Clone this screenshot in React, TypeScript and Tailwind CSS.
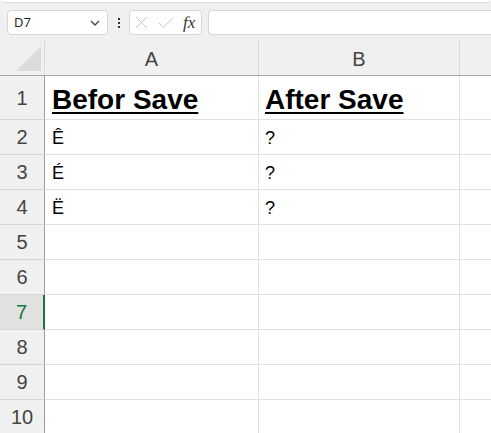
import React from "react";

const rows = [
  { n: 1, a: "Befor Save", b: "After Save", h: true },
  { n: 2, a: "Ê", b: "?" },
  { n: 3, a: "É", b: "?" },
  { n: 4, a: "Ë", b: "?" },
  { n: 5, a: "", b: "" },
  { n: 6, a: "", b: "" },
  { n: 7, a: "", b: "", active: true },
  { n: 8, a: "", b: "" },
  { n: 9, a: "", b: "" },
  { n: 10, a: "", b: "" },
];

export default function App() {
  return (
    <div
      className="w-[491px] h-[433px] overflow-hidden bg-[#f0f0f0] text-black"
      style={{ fontFamily: '"Liberation Sans", Arial, sans-serif' }}
    >
      {/* top strip */}
      <div className="h-[3px] mx-[1px] bg-white border-b border-[#d9d9d9] rounded-b-[3px]" />
      {/* formula bar */}
      <div className="h-[37px] flex items-start pt-[7px] pl-[7px]">
        <div className="w-[101px] h-[25px] bg-white border border-[#d6d6d6] rounded-[4px] flex items-center pl-[6px] pr-[6px]">
          <span className="text-[13px] text-[#1a1a1a] flex-1" style={{ fontFamily: '"Open Sans", sans-serif' }}>D7</span>
          <svg width="10" height="6" viewBox="0 0 10 6" className="mr-[1px]">
            <path d="M1 1 L5 5 L9 1" fill="none" stroke="#444" strokeWidth="1.3" />
          </svg>
        </div>
        <div className="w-[21px] h-[25px] flex flex-col items-center justify-center gap-[2px]">
          <div className="w-[2px] h-[2px] bg-[#333]" />
          <div className="w-[2px] h-[2px] bg-[#333]" />
          <div className="w-[2px] h-[2px] bg-[#333]" />
        </div>
        <div className="w-[73px] h-[25px] bg-white border border-[#d6d6d6] rounded-[4px] flex items-center pl-[5px]">
          <svg width="13" height="13" viewBox="0 0 13 13">
            <path d="M1 1 L12 12 M12 1 L1 12" stroke="#c8c8c8" strokeWidth="1" fill="none" />
          </svg>
          <svg width="16" height="12" viewBox="0 0 16 12" className="ml-[10px]">
            <path d="M1 6 L5.5 10.5 L15 1" stroke="#c8c8c8" strokeWidth="1" fill="none" />
          </svg>
          <span
            className="ml-[9px] text-[17px] italic text-[#333] leading-none"
            style={{ fontFamily: '"Liberation Serif", "DejaVu Serif", serif' }}
          >
            fx
          </span>
        </div>
        <div className="ml-[6px] flex-1 h-[25px] bg-white border border-[#d6d6d6] rounded-l-[4px] border-r-0" />
      </div>
      {/* grid */}
      <div className="bg-white">
        {/* column header */}
        <div className="flex h-[36px] bg-[#f0f0f0] border-b border-[#a6a6a6]">
          <div className="w-[45px] shrink-0 border-r border-[#dadada] relative">
            <svg width="26" height="26" viewBox="0 0 26 26" className="absolute left-[16px] top-[6px]">
              <path d="M25 0 L25 25 L0 25 Z" fill="#dcdcdc" />
            </svg>
          </div>
          <div className="w-[214px] shrink-0 border-r border-[#d9d9d9] flex items-center justify-center text-[20px] text-[#444] pt-[2px]">
            A
          </div>
          <div className="w-[201px] shrink-0 border-r border-[#d9d9d9] flex items-center justify-center text-[20px] text-[#444] pt-[2px]">
            B
          </div>
          <div className="flex-1" />
        </div>
        {rows.map((r) => (
          <div key={r.n} className={`flex ${r.h ? "h-[44px]" : "h-[35px]"}`}>
            <div
              className={`w-[45px] shrink-0 flex items-center justify-center text-[20px] border-b border-[#d6d6d6] ${
                r.active
                  ? "bg-[#e1e1e1] text-[#107c41] border-r-2 border-r-[#217346]"
                  : "bg-[#f0f0f0] text-[#444] border-r border-r-[#9e9e9e]"
              }`}
            >
              <span>{r.n}</span>
            </div>
            <div
              className={`w-[214px] shrink-0 border-r border-b border-[#e1e1e1] flex items-end pl-[7px] ${
                r.h ? "pb-[5px]" : "pb-[7px]"
              }`}
            >
              {r.h ? (
                <span className="text-[28px] font-bold leading-none underline decoration-2 underline-offset-[3px]">
                  {r.a}
                </span>
              ) : (
                <span className="text-[18px] leading-none">{r.a}</span>
              )}
            </div>
            <div
              className={`w-[201px] shrink-0 border-r border-b border-[#e1e1e1] flex items-end pl-[6px] ${
                r.h ? "pb-[5px]" : "pb-[7px]"
              }`}
            >
              {r.h ? (
                <span className="text-[28px] font-bold leading-none underline decoration-2 underline-offset-[3px]">
                  {r.b}
                </span>
              ) : (
                <span className="text-[18px] leading-none">{r.b}</span>
              )}
            </div>
            <div className="flex-1 border-b border-[#e1e1e1]" />
          </div>
        ))}
      </div>
    </div>
  );
}
